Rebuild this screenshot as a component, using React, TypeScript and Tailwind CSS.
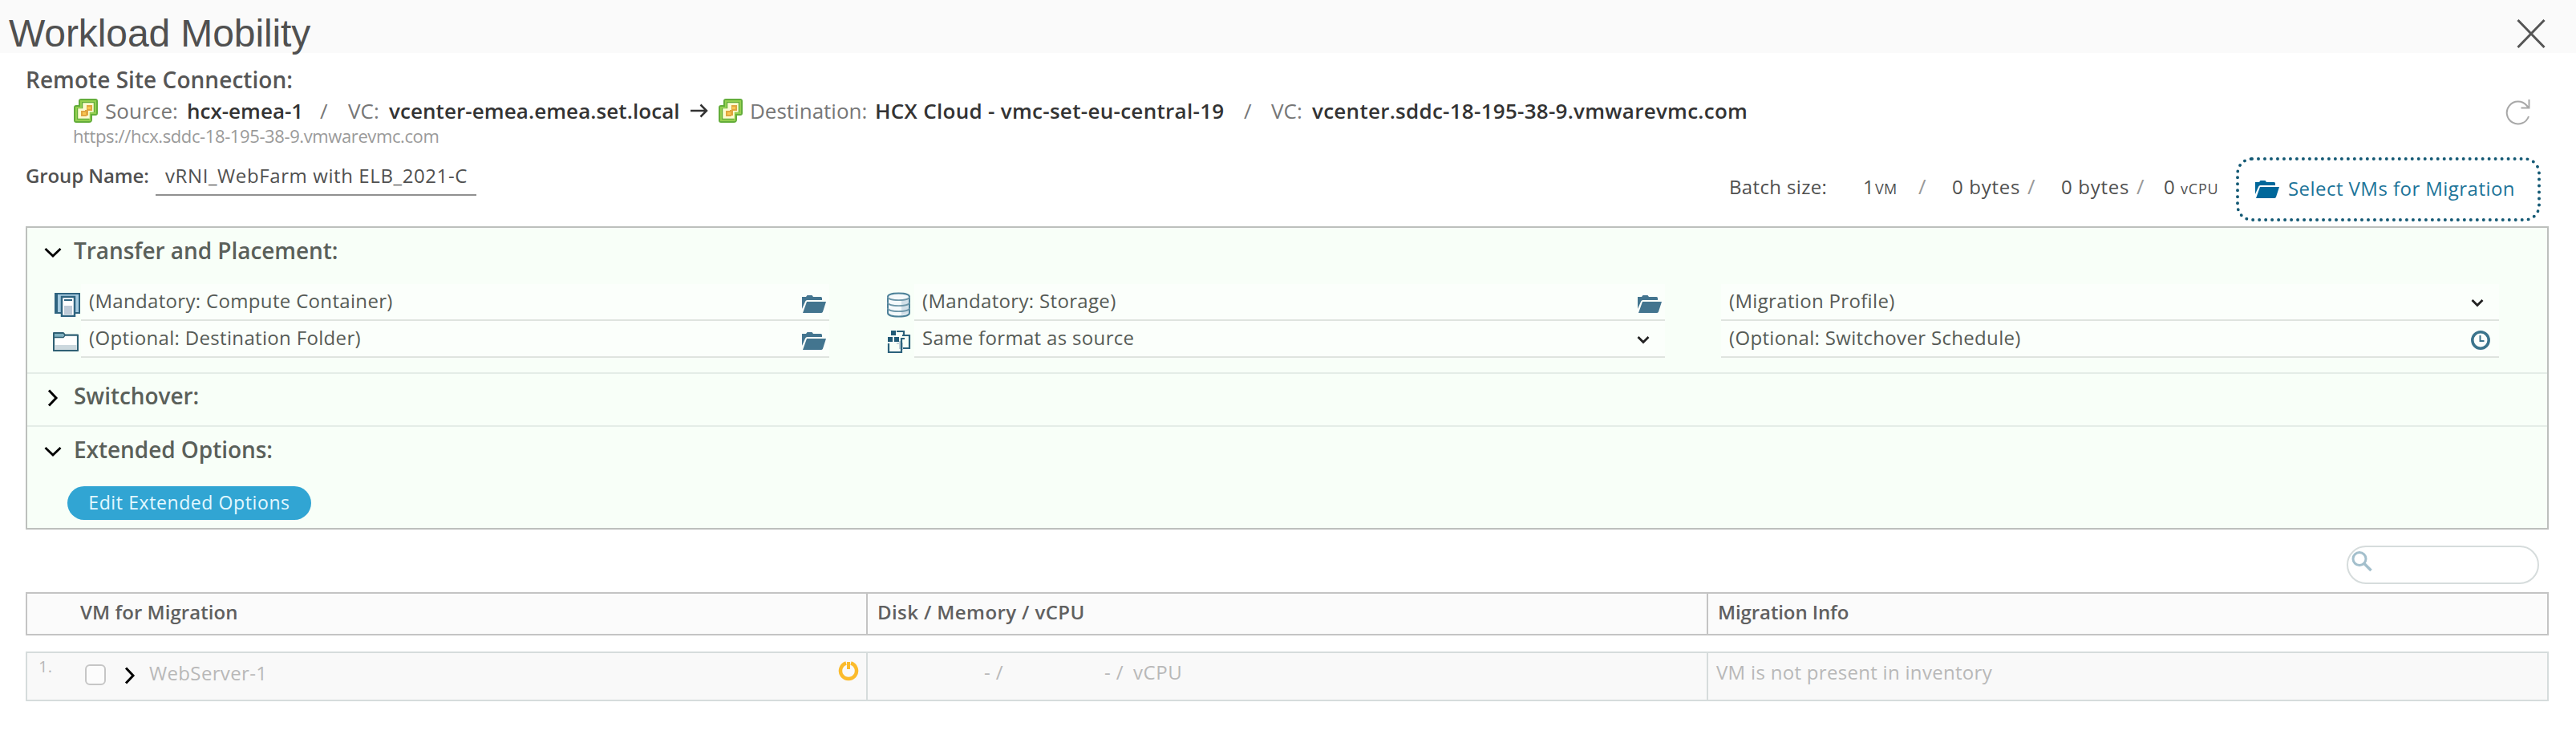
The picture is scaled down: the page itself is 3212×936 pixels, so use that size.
import React from 'react';
import clsx from 'clsx';

function VSphereIcon() {
  return (
    <svg width="32" height="32" viewBox="0 0 32 32" className="shrink-0">
      <path
        d="M10 1h18a3 3 0 0 1 3 3v15a3 3 0 0 1-3 3h-4v5a4 4 0 0 1-4 4H4a3 3 0 0 1-3-3V12a3 3 0 0 1 3-3h3V4a3 3 0 0 1 3-3z"
        fill="#63ad3a"
      />
      <path d="M11 4h17v15h-7v9H4V12h6V4z" fill="none" stroke="#94cf50" strokeWidth="2" />
      <path d="M13 7h12v10h-5v8H7V14h6z" fill="#fdfbd0" stroke="#fdfbd0" strokeWidth="1.500" />
      <path d="M17 9h7v7h-5v6h-2v1h-7v-7h5v-1h2z" fill="#e0a540" />
      <path d="M18 11h4v3h-4zM12 18h4v3h-4z" fill="#f9c64f" />
    </svg>
  );
}

function OpenFolderIcon({ color }: { color: string }) {
  return (
    <svg width="30" height="22" viewBox="0 0 30 22" className="shrink-0" fill={color}>
      <path d="M0 4V2h5l1.500-2h6L14 2h9.500a1.500 1.500 0 0 1 1.500 1.500V6H6.500a2.500 2.500 0 0 0-2.400 1.700L0 17z" />
      <path d="M6 8h24l-4 12.500a2 2 0 0 1-2 1.500H1z" />
    </svg>
  );
}

function Chevron({ dir, className }: { dir: 'down' | 'right' | 'select'; className?: string }) {
  if (dir === 'right') {
    return (
      <svg width="14" height="22" viewBox="0 0 14 22" className={clsx('shrink-0', className)}>
        <path d="M2 1.500l9 9.500-9 9.500" fill="none" stroke="#000" strokeWidth="3" />
      </svg>
    );
  }
  if (dir === 'select') {
    return (
      <svg width="16" height="12" viewBox="0 0 16 12" className={clsx('shrink-0', className)}>
        <path d="M1.500 2L8 8.500 14.500 2" fill="none" stroke="#222" strokeWidth="2.800" />
      </svg>
    );
  }
  return (
    <svg width="22" height="14" viewBox="0 0 22 14" className={clsx('shrink-0', className)}>
      <path d="M1.500 2L11 11l9.500-9" fill="none" stroke="#000" strokeWidth="2.800" />
    </svg>
  );
}

function ComputeIcon() {
  return (
    <svg width="32" height="30" viewBox="0 0 32 30" className="ml-[2px]">
      <path d="M1 1h30v24H1z" fill="#a6cbe0" stroke="#2f6480" strokeWidth="2" />
      <path d="M2.500 2v22" stroke="#2f6480" strokeWidth="3" />
      <path d="M9 5h16v24H9z" fill="#fff" stroke="#2f6480" strokeWidth="2.500" />
      <path d="M12 9h10" stroke="#2f6480" strokeWidth="2" />
      <path d="M12 16h10v11H12z" fill="#bfcbd8" />
    </svg>
  );
}

function FolderIcon() {
  return (
    <svg width="32" height="24" viewBox="0 0 32 24">
      <path d="M1 1.200h12l2 2.500h16V23H1z" fill="#fff" stroke="#2f6074" strokeWidth="2.200" strokeLinejoin="round" />
      <path d="M2 2h11l1 2-2 2H2z" fill="#7fb0c0" />
      <path d="M2.500 16h27v6h-27z" fill="#ccd8de" />
      <path d="M2 6.500h11l2-2.500" fill="none" stroke="#2f6074" strokeWidth="1.500" />
    </svg>
  );
}

function StorageIcon() {
  return (
    <svg width="30" height="32" viewBox="0 0 30 32">
      <path d="M1 6c0-6 27-6 27 0v20c0 6-27 6-27 0z" fill="#f4f9fb" stroke="#4d8299" strokeWidth="2" />
      <path d="M18 10l9-2v18l-9 3z" fill="#d2dfe8" />
      <path d="M1 6c0 5.500 27 5.500 27 0M1 13c0 5.500 27 5.500 27 0M1 20c0 5.500 27 5.500 27 0" fill="none" stroke="#6d96a8" strokeWidth="1.800" />
    </svg>
  );
}

function FormatIcon() {
  return (
    <svg width="30" height="30" viewBox="0 0 30 30">
      <path d="M12 2h9v5M19 7h9v16h-9" fill="none" stroke="#2c627c" strokeWidth="2.200" />
      <path d="M12 17h7v8M16 14v9h4" fill="none" stroke="#c3d2d8" strokeWidth="2" />
      <path d="M2 17v11h16V11h4" fill="none" stroke="#2c627c" strokeWidth="2.200" />
      <path d="M5 1h6v6H5zM1 9h6v6H1zM9 9h6v6H9z" fill="#215a76" />
    </svg>
  );
}

function ClockIcon() {
  return (
    <svg width="24" height="24" viewBox="0 0 24 24">
      <circle cx="12" cy="12" r="10.200" fill="#fcfffc" stroke="#3b748c" strokeWidth="3.500" />
      <path d="M11.500 6v7h5" fill="none" stroke="#3b748c" strokeWidth="2" />
    </svg>
  );
}

function SectionTitle({ open, children }: { open?: boolean; children: React.ReactNode }) {
  return (
    <div className={clsx('flex items-center pl-[21px]', open ? 'h-[54px]' : 'h-[52px]')}>
      <div className={clsx('w-[37px]', open ? 'pt-[8px]' : 'pt-[7px]')}>
        <Chevron dir={open ? 'down' : 'right'} className={open ? '' : 'ml-[4px]'} />
      </div>
      <h2 className="pt-[1px] text-[28px] font-semibold tracking-[-0.05px] text-[#5a605a]">{children}</h2>
    </div>
  );
}

interface FieldProps {
  label: string;
  width: string;
  action: 'folder' | 'select' | 'clock';
  icon?: React.ReactNode;
  slot?: string;
}

function Field({ label, width, action, icon, slot }: FieldProps) {
  return (
    <div className="flex h-[46px]">
      {slot && <div className={clsx('flex items-center pt-[6px]', slot)}>{icon}</div>}
      <div className={clsx('flex items-center justify-between border-b-2 border-[#dfe4df] bg-[#fbfffb] pl-[10px]', width)}>
        <span className="pb-[2px] tracking-[0.33px] text-[#565b56]">{label}</span>
        {action === 'folder' && <div className="pr-[4px] pt-[6px]"><OpenFolderIcon color="#43758f" /></div>}
        {action === 'select' && <div className="pr-[19px] pt-[3px]"><Chevron dir="select" /></div>}
        {action === 'clock' && <div className="pr-[11px] pt-[3px]"><ClockIcon /></div>}
      </div>
    </div>
  );
}

export default function App() {
  return (
    <div className="h-[936px] w-[3212px] overflow-hidden whitespace-nowrap bg-white font-['Open_Sans',sans-serif] text-[24px] tracking-[0.35px] text-[#505050]">
      <header className="flex h-[66px] justify-between bg-[#fafafa] pl-[11px] pr-[38px]">
        <h1 className="font-['Liberation_Sans',sans-serif] text-[48px] leading-[83px] tracking-[-0.1px] text-[#505050]">
          Workload Mobility
        </h1>
        <svg width="36" height="38" viewBox="0 0 36 38" className="mt-[23px]">
          <path d="M1.500 2l33 34M34.500 2l-33 34" stroke="#555" strokeWidth="3" />
        </svg>
      </header>

      <main className="pl-[32px] pr-[34px]">
        <h2 className="pt-[16px] text-[28px] font-semibold leading-[34px] tracking-[0.05px] text-[#565656]">
          Remote Site Connection:
        </h2>

        <div className="flex h-[44px] items-center pl-[59px] pr-[22px] text-[26px]">
          <VSphereIcon />
          <span className="ml-[8px] w-[102px] tracking-[0.1px] text-[#777]">Source:</span>
          <span className="w-[166px] font-semibold tracking-normal text-[#333]">hcx-emea-1</span>
          <span className="w-[35px] text-[#777]">/</span>
          <span className="w-[51px] tracking-normal text-[#777]">VC:</span>
          <span className="w-[376px] font-semibold tracking-[0.08px] text-[#333]">vcenter-emea.emea.set.local</span>
          <svg width="22" height="18" viewBox="0 0 22 18">
            <path d="M0 9h20M12.500 1.500L20 9l-7.500 7.500" fill="none" stroke="#333" strokeWidth="2.500" />
          </svg>
          <span className="w-[12px]" />
          <VSphereIcon />
          <span className="ml-[8px] w-[156px] tracking-normal text-[#777]">Destination:</span>
          <span className="w-[460px] font-semibold tracking-[0.3px] text-[#333]">HCX Cloud - vmc-set-eu-central-19</span>
          <span className="w-[34px] text-[#777]">/</span>
          <span className="w-[51px] tracking-normal text-[#777]">VC:</span>
          <span className="font-semibold tracking-[0.27px] text-[#333]">vcenter.sddc-18-195-38-9.vmwarevmc.com</span>
          <svg width="32" height="34" viewBox="0 0 32 34" className="ml-auto mt-[4px]">
            <path d="M29 22A14 14 0 1 1 26.500 8.500L29 11.500M29.500 1v10.500H19.500" fill="none" stroke="#a8a8a8" strokeWidth="2" />
          </svg>
        </div>

        <div className="pl-[59px] text-[22px] leading-[19px] tracking-[-0.39px] text-[#9a9a9a]">
          https://hcx.sddc-18-195-38-9.vmwarevmc.com
        </div>

        <div className="flex h-[103px] items-start justify-between pr-[10px] pt-[17px]">
          <div className="flex h-[48px] items-center">
            <label className="w-[162px] pb-[2px] font-semibold tracking-[-0.1px]">Group Name:</label>
            <div className="h-[48px] w-[400px] border-b-2 border-[#909090] pl-[12px] leading-[45px] tracking-[0.6px]">
              vRNI_WebFarm with ELB_2021-C
            </div>
          </div>
          <div className="flex h-[80px] items-center">
            <div className="flex items-baseline pb-[6px]">
              <span className="w-[167px]">Batch size:</span>
              <span className="w-[15px]">1</span>
              <span className="w-[54px] text-[18px]">VM</span>
              <span className="w-[42px] text-[26px] leading-8 text-[#999]">/</span>
              <span className="w-[94px] tracking-[0.7px]">0 bytes</span>
              <span className="w-[42px] text-[26px] leading-8 text-[#999]">/</span>
              <span className="w-[94px] tracking-[0.7px]">0 bytes</span>
              <span className="w-[34px] text-[26px] leading-8 text-[#999]">/</span>
              <span className="w-[21px]">0</span>
              <span className="w-[69px] text-[18px] tracking-[0.8px]">vCPU</span>
            </div>
            <button className="flex h-[80px] w-[380px] items-center rounded-[20px] border-4 border-dotted border-[#155a75] pl-[20px] text-[#1d7499]">
              <OpenFolderIcon color="#00679a" />
              <span className="ml-[11px] pb-[2px] tracking-[0.45px]">Select VMs for Migration</span>
            </button>
          </div>
        </div>

        <div className="h-[378px] border-2 border-[#bdc0bd] bg-[#f8fff8]">
          <section className="h-[182px] border-b-2 border-[#e4ede7]">
            <SectionTitle open>Transfer and Placement:</SectionTitle>
            <div className="flex pl-[32px] pt-[16px]">
              <div className="mr-[72px]">
                <Field label="(Mandatory: Compute Container)" slot="w-[35px]" width="w-[933px]" icon={<ComputeIcon />} action="folder" />
                <Field label="(Optional: Destination Folder)" slot="w-[35px]" width="w-[933px]" icon={<FolderIcon />} action="folder" />
              </div>
              <div className="mr-[70px]">
                <Field label="(Mandatory: Storage)" slot="w-[34px]" width="w-[936px]" icon={<StorageIcon />} action="folder" />
                <Field label="Same format as source" slot="w-[34px]" width="w-[936px]" icon={<FormatIcon />} action="select" />
              </div>
              <div>
                <Field label="(Migration Profile)" width="w-[970px]" action="select" />
                <Field label="(Optional: Switchover Schedule)" width="w-[970px]" action="clock" />
              </div>
            </div>
          </section>
          <section className="h-[66px] border-b-2 border-[#e4ede7]">
            <SectionTitle>Switchover:</SectionTitle>
          </section>
          <section>
            <SectionTitle open>Extended Options:</SectionTitle>
            <button className="ml-[50px] mt-[20px] flex h-[42px] w-[304px] items-center justify-center rounded-full bg-[#31a5d3] pb-[2px] text-[23px] font-medium tracking-[0.6px] text-[#e3f8ff]">
              Edit Extended Options
            </button>
          </section>
        </div>

        <div className="mt-[20px] flex justify-end pr-[12px]">
          <div className="h-[48px] w-[240px] rounded-full border-2 border-[#d6dcdc] pl-[4px] pt-[5px]">
            <svg width="28" height="26" viewBox="0 0 28 26">
              <circle cx="10" cy="9.500" r="8" fill="none" stroke="#a3bfcc" strokeWidth="3" />
              <path d="M15.500 15l9 9" stroke="#a3bfcc" strokeWidth="3.500" />
            </svg>
          </div>
        </div>

        <div className="mt-[10px] grid h-[54px] grid-cols-[1046px_1048px_1fr] border-2 border-[#c4c4c4] bg-[#fbfbfb] font-semibold text-[#606060]">
          <div className="flex items-center pb-[4px] pl-[66px] tracking-[0.05px]">VM for Migration</div>
          <div className="flex items-center border-l-2 border-[#c4c4c4] pb-[4px] pl-[12px] tracking-[0.4px]">Disk / Memory / vCPU</div>
          <div className="flex items-center border-l-2 border-[#c4c4c4] pb-[4px] pl-[12px] tracking-[-0.1px]">Migration Info</div>
        </div>

        <div className="mt-[20px] grid h-[62px] grid-cols-[1046px_1048px_1fr] border-2 border-[#d6dcdc] bg-[#f9f9f9] text-[#b8b8b8]">
          <div className="flex pl-[14px]">
            <span className="w-[58px] text-[20px] leading-[34px]">1.</span>
            <span className="mt-[14px] h-[26px] w-[26px] rounded-[6px] border-2 border-[#c6c6c6] bg-[#fcfcfc]" />
            <Chevron dir="right" className="ml-[23px] mt-[17px]" />
            <span className="ml-[17px] leading-[49px]">WebServer-1</span>
            <svg width="26" height="28" viewBox="0 0 26 28" className="ml-auto mr-[9px] mt-[8px]">
              <path d="M10 4.500a10 10 0 1 0 6 0" fill="none" stroke="#fbbb2c" strokeWidth="4.500" />
              <path d="M13 3v9" stroke="#fbbb2c" strokeWidth="4" />
            </svg>
          </div>
          <div className="flex border-l-2 border-[#d6dcdc] pl-[145px] leading-[48px]">
            <span className="w-[150px]">- /</span>
            <span className="w-[36px]">- /</span>
            <span className="tracking-[0.6px]">vCPU</span>
          </div>
          <div className="border-l-2 border-[#d6dcdc] pl-[10px] leading-[47px] tracking-[0.3px]">VM is not present in inventory</div>
        </div>
      </main>
    </div>
  );
}
